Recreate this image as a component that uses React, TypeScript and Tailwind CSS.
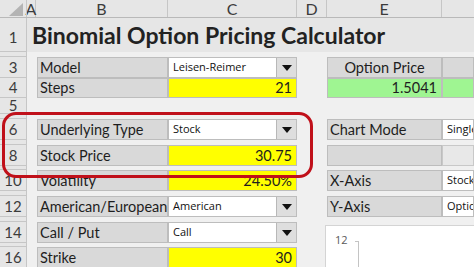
import React from "react";

const Hdr = ({ n, cls = "" }: { n?: string; cls?: string }) => (
  <div
    className={
      "w-[27px] shrink-0 h-full bg-[#e6e6e6] border-r border-b border-[#c6c6c6] flex justify-center text-[15px] leading-none text-[#3c3c3c] " +
      (cls || "items-center")
    }
  >
    {n}
  </div>
);

const Arrow = () => (
  <div className="w-[20px] h-full shrink-0 bg-[#dedede] border-l border-[#b8b8b8] flex items-center justify-center">
    <svg width="10" height="6" viewBox="0 0 10 6">
      <polygon points="0,0 10,0 5,6" fill="#111" />
    </svg>
  </div>
);

const Label = ({ t, w = "w-[131px] ml-[1px]", center = false }: { t: string; w?: string; center?: boolean }) => (
  <div
    className={
      w +
      " h-full shrink-0 bg-[#d9d9d9] border border-[#bdbdbd] flex items-center text-[14.5px] text-[#1e1e1e] whitespace-nowrap " +
      (center ? "justify-center" : "pl-[2px]")
    }
  >
    {t}
  </div>
);

const Drop = ({ t }: { t: string }) => (
  <div className="w-[129px] h-full shrink-0 bg-white border border-[#bdbdbd] flex items-stretch">
    <div className="flex-1 flex items-center pl-[4px] text-[11px] text-[#111] font-['Open_Sans',sans-serif]">{t}</div>
    <Arrow />
  </div>
);

const Yellow = ({ t }: { t: string }) => (
  <div className="w-[129px] h-full shrink-0 bg-[#ffff00] border border-[#bdbdbd] flex items-center justify-end pr-[4px] text-[14.5px] text-[#1e1e1e]">
    {t}
  </div>
);

const FDrop = ({ t }: { t: string }) => (
  <div className="flex-1 h-full bg-white border border-[#bdbdbd] flex items-center pl-[4px] text-[11px] text-[#111] font-['Open_Sans',sans-serif] overflow-hidden whitespace-nowrap">
    {t}
  </div>
);

const Gap = () => <div className="w-[9px] shrink-0" />;
const D = () => <div className="w-[30px] shrink-0" />;

const Spacer = ({ h }: { h: string }) => (
  <div className={"flex " + h}>
    <Hdr />
    <div className="flex-1" />
  </div>
);

export default function App() {
  return (
    <div className="relative w-[474px] h-[267px] overflow-hidden bg-[#f0f0f0] font-[Lato,sans-serif]">
      {/* column header */}
      <div className="flex h-[18px] bg-[#e6e6e6] border-b border-[#b9b9b9] text-[16px] text-[#3c3c3c] leading-none">
        <div className="w-[27px] shrink-0 h-full border-r border-[#c6c6c6] relative">
          <svg className="absolute left-[9px] top-[3px]" width="14" height="13" viewBox="0 0 14 13">
            <polygon points="14,0 14,13 0,13" fill="#b4b4b4" />
          </svg>
        </div>
        <div className="w-[9px] shrink-0 border-r border-[#c6c6c6] flex items-center justify-center">A</div>
        <div className="w-[132px] shrink-0 border-r border-[#c6c6c6] flex items-center justify-center">B</div>
        <div className="w-[129px] shrink-0 border-r border-[#c6c6c6] flex items-center justify-center">C</div>
        <div className="w-[30px] shrink-0 border-r border-[#c6c6c6] flex items-center justify-center">D</div>
        <div className="w-[115px] shrink-0 border-r border-[#c6c6c6] flex items-center justify-center">E</div>
        <div className="flex-1" />
      </div>

      {/* row 1 */}
      <div className="flex h-[34px]">
        <Hdr n="1" cls="items-end pb-[6px]" />
        <div className="flex-1 bg-[#e6e6e6] pl-[5px] pt-[4px] text-[23px] font-bold text-[#222] whitespace-nowrap leading-[27px]">
          Binomial Option Pricing Calculator
        </div>
      </div>
      <Spacer h="h-[5px]" />

      {/* row 3 */}
      <div className="flex h-[21px]">
        <Hdr n="3" />
        <Gap />
        <Label t="Model" />
        <Drop t="Leisen-Reimer" />
        <D />
        <Label t="Option Price" w="w-[115px]" center />
        <div className="flex-1 h-full bg-[#d9d9d9] border border-[#bdbdbd]" />
      </div>
      {/* row 4 */}
      <div className="flex h-[20px]">
        <Hdr n="4" />
        <Gap />
        <Label t="Steps" />
        <Yellow t="21" />
        <D />
        <div className="w-[115px] h-full shrink-0 bg-[#9ff592] border border-[#bdbdbd] flex items-center justify-end pr-[4px] text-[14.5px] text-[#1e1e1e]">
          1.5041
        </div>
        <div className="flex-1 h-full bg-[#9ff592] border border-[#bdbdbd]" />
      </div>
      {/* row 5 */}
      <div className="flex h-[16px]">
        <Hdr n="5" />
        <div className="flex-1" />
      </div>
      <Spacer h="h-[5px]" />

      {/* row 6 */}
      <div className="flex h-[21px]">
        <Hdr n="6" />
        <Gap />
        <Label t="Underlying Type" />
        <Drop t="Stock" />
        <D />
        <Label t="Chart Mode" w="w-[115px]" />
        <FDrop t="Single" />
      </div>
      <Spacer h="h-[5px]" />

      {/* row 8 */}
      <div className="flex h-[21px]">
        <Hdr n="8" />
        <Gap />
        <Label t="Stock Price" />
        <Yellow t="30.75" />
        <D />
        <Label t="" w="w-[115px]" />
        <div className="flex-1 h-full bg-[#e8e8e8] border border-[#c8c8c8]" />
      </div>
      <Spacer h="h-[4px]" />

      {/* row 10 */}
      <div className="flex h-[21px]">
        <Hdr n="10" />
        <Gap />
        <Label t="Volatility" />
        <Yellow t="24.50%" />
        <D />
        <Label t="X-Axis" w="w-[115px]" />
        <FDrop t="Stock Price" />
      </div>
      <Spacer h="h-[5px]" />

      {/* row 12 */}
      <div className="flex h-[21px]">
        <Hdr n="12" />
        <Gap />
        <Label t="American/European" />
        <Drop t="American" />
        <D />
        <Label t="Y-Axis" w="w-[115px]" />
        <FDrop t="Option Price" />
      </div>
      <Spacer h="h-[5px]" />

      {/* row 14 */}
      <div className="flex h-[21px]">
        <Hdr n="14" />
        <Gap />
        <Label t="Call / Put" />
        <Drop t="Call" />
        <div className="flex-1" />
      </div>
      <Spacer h="h-[4px]" />

      {/* row 16 */}
      <div className="flex h-[21px]">
        <Hdr n="16" />
        <Gap />
        <Label t="Strike" />
        <Yellow t="30" />
        <div className="flex-1" />
      </div>

      {/* chart object */}
      <div className="absolute left-[325px] top-[225px] w-[160px] h-[50px] bg-white border border-[#d4d4d4]">
        <div className="absolute left-[9px] top-[8px] text-[11px] leading-none text-[#595959] font-['Open_Sans',sans-serif]">12</div>
        <div className="absolute left-[29px] top-[15px] w-[4px] h-px bg-[#c4c4c4]" />
        <div className="absolute left-[32px] top-[15px] w-px h-[40px] bg-[#c4c4c4]" />
      </div>

      {/* red annotation */}
      <div className="absolute left-[2px] top-[112px] w-[311px] h-[66px] border-[3px] border-[#c0101a] rounded-[14px] pointer-events-none" />
    </div>
  );
}
